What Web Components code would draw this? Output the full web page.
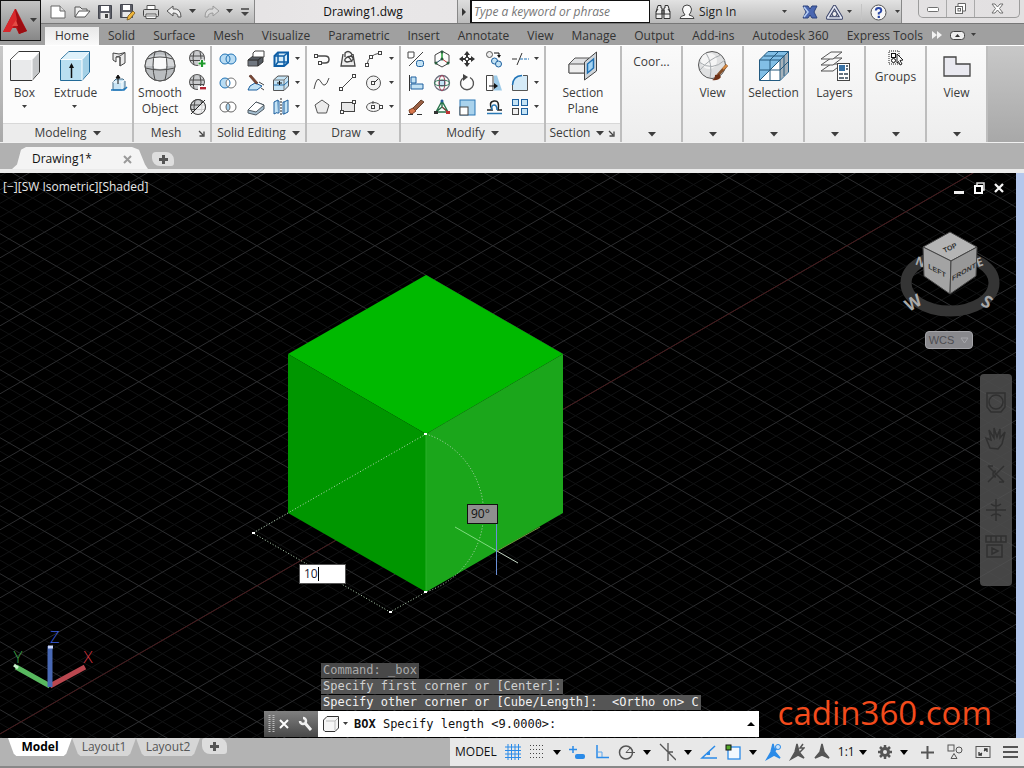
<!DOCTYPE html>
<html lang="en">
<head>
<meta charset="utf-8">
<meta name="viewport" content="width=device-width, initial-scale=1">
<title>Drawing1.dwg</title>
<style>
html, body { margin: 0; height: 100%; }
body { background: #b1b1b1; font: 12px/16px "Open Sans", "Noto Sans", sans-serif; color: #3c3c3c; overflow: hidden; }
</style>
</head>
<body>
<cad-app></cad-app>
<script>
const BASE = `
*,*::before,*::after{box-sizing:border-box}
button{font:inherit;color:inherit;background:none;border:0;margin:0;padding:0;display:inline-flex;align-items:center;justify-content:center;cursor:default}
input{font:inherit;color:inherit;border:0;margin:0;padding:0;background:none;outline:0;border-radius:0}
a{color:inherit;text-decoration:none}
cad-icon{flex:none}
`;
function define(name, css, html, setup) {
  customElements.define(name, class extends HTMLElement {
    constructor() {
      super();
      this.attachShadow({ mode: "open" });
    }
    connectedCallback() {
      if (this.shadowRoot.firstChild) return;
      const markup = typeof html === "function" ? html(this) : html;
      this.shadowRoot.innerHTML = `<style>${BASE}${css}</style>${markup}`;
      if (setup) setup(this);
    }
  });
}

/* Icon drawings: [width, height, markup] */
const K = 'fill="none" stroke="#4a4a4a"';
const B = 'fill="#c4e3f5" stroke="#1c5f9e"';
const dot = (x, y) => `<rect x="${x - 1.5}" y="${y - 1.5}" width="3" height="3" fill="#fff" stroke="#444"/>`;
const sphere = `<circle cx="8" cy="8" r="7.5" fill="#c9cbcd" stroke="#555"/><path d="M1 6H15M1 10.500H15M5 1.500Q3 8 5 15M11 1.500Q13 8 11 15" ${K}/>`;
const rings = f => `<circle cx="6" cy="8" r="5" fill="${f[0]}"/><circle cx="12" cy="8" r="5" fill="${f[1]}"/><path d="M9 4A5 5 0 0 1 9 12A5 5 0 0 1 9 4" fill="${f[2]}"/><circle cx="6" cy="8" r="5" fill="none" stroke="${f[3]}"/><circle cx="12" cy="8" r="5" fill="none" stroke="${f[4]}"/>`;
const person = `M8 1L10 9L15 15L9 12L2 16L6 9Z`;
const ICONS = {
  caret: [8, 5, `<path d="M0 0H8L4 4.500Z" fill="#3d3d3d"/>`],
  caretS: [6, 4, `<path d="M0 0H5L2.500 3Z" fill="#3d3d3d"/>`],
  caretM: [8, 5, `<path d="M0 0H7L3.500 4Z" fill="#3d3d3d"/>`],
  caretB: [8, 5, `<path d="M0 0H8L4 5Z" fill="#000"/>`],
  up: [8, 5, `<path d="M0 4H8L4 0Z" fill="#000"/>`],
  launcher: [7, 7, `<path d="M1 1L5 5M6 1.500V6H1.500" fill="none" stroke="#444" stroke-width="1.300"/>`],
  logo: [24, 26, `<path d="M12 1H13L24 23L16 26L13 20L8 20L7 24L0 24Z" fill="#b41318"/><path d="M12 1L15 11L7 24L0 24Z" fill="#d8272b"/><path d="M12 1L18 13L24 23L16 26L14 18L10 18L14 12Z" fill="#9c0d12"/><path d="M9 18L13 12L15 18Z" fill="#e34b44"/>`],
  newf: [18, 16, `<path d="M2 2H11L16 7V14H2Z" fill="#fff" stroke="#666"/><path d="M11 2V7H16" fill="#ddd" stroke="#666"/>`],
  open: [18, 16, `<path d="M2 13V3H7L9 5H14V7" fill="#eee" stroke="#555"/><path d="M2 13L6 7H17L12 13Z" fill="#fff" stroke="#555"/>`],
  save: [16, 16, `<path d="M1.500 1.500H14.500V14.500H1.500Z" fill="#5b5d66" stroke="#44464e"/><rect x="4" y="2" width="8" height="5" fill="#fff"/><rect x="3.500" y="9" width="9" height="6" fill="#e8e8e8"/><rect x="8" y="10" width="3" height="4" fill="#444"/>`],
  saveas: [17, 18, `<path d="M1.500 1.500H13.500V14.500H1.500Z" fill="#5b5d66" stroke="#44464e"/><rect x="4" y="2" width="7" height="5" fill="#fff"/><rect x="3.500" y="9" width="8" height="5" fill="#e8e8e8"/><path d="M8 17L9 13L14 8L16 10L11 16Z" fill="#f0b63c" stroke="#74551b" stroke-width=".8"/>`],
  print: [18, 16, `<path d="M5 6V1.500H13V6" fill="#fff" stroke="#555"/><rect x="1.500" y="5.500" width="15" height="7" rx="1" fill="#d4d4d4" stroke="#444"/><path d="M4 10H14V14.500H4Z" fill="#fff" stroke="#555"/><path d="M5 12H13" stroke="#777"/>`],
  undo: [17, 13, `<path d="M1 6L7 1V4Q15 3 15 12H12Q12 8 7 8V11Z" fill="#eee" stroke="#555"/>`],
  redo: [17, 13, `<path d="M16 6L10 1V4Q2 3 2 12H5Q5 8 10 8V11Z" fill="#d8d8d8" stroke="#999"/>`],
  more: [10, 8, `<path d="M1 1H9" stroke="#444" stroke-width="1.500"/><path d="M1 4H9L5 8Z" fill="#444"/>`],
  play: [6, 8, `<path d="M1 0L5 4L1 8Z" fill="#333"/>`],
  bino: [16, 16, `<path d="M3 1.500H6V4H7V14.500H1V8ZM10 1.500H13L15 8V14.500H9V4H10ZM7 6H9V10H7ZM1 10H7M9 10H15M1 8L3 5M15 8L13 5" fill="#eee" stroke="#333"/>`],
  person: [16, 16, `<path d="M1 14.500Q1 12 6 11Q3.500 8 3.500 5Q4 1 8 1T12.500 5Q12.500 8 10 11Q15 12 15 14.500Z" fill="#fafafa" stroke="#444"/>`],
  exch: [16, 14, `<path d="M1 1H6L8 4L10 1H15L12 7L15 13H10L8 10L6 13H1L4 7Z" fill="#4a66b0" stroke="#2d437d"/><path d="M2 2L6 7L2 12" fill="none" stroke="#b7cff3" stroke-width="1.500"/>`],
  a360: [17, 15, `<path d="M8.500 1.500L15.500 13H1.500Z" fill="none" stroke="#3b4468" stroke-width="3.500" stroke-linejoin="round"/><path d="M8.500 1.500L15.500 13H1.500Z" fill="none" stroke="#e3e7f2" stroke-width="1.500" stroke-linejoin="round"/><circle cx="8.500" cy="9" r="2.500" fill="#eee" stroke="#3b4468"/>`],
  help: [17, 17, `<circle cx="8.500" cy="8.500" r="7.500" fill="#f7f7f7" stroke="#555"/><path d="M5.800 6.500Q6 4 8.600 4T11.300 6.500Q11.300 8 8.800 9.200V10.500" fill="none" stroke="#2946a4" stroke-width="2"/><rect x="7.700" y="11.800" width="2.200" height="2.200" fill="#2946a4"/>`],
  wmin: [14, 6, `<rect x="1.500" y="1.500" width="11" height="4" rx="1" fill="#fff" stroke="#707070"/>`],
  wmax: [13, 13, `<path d="M4 4V1.500H11.500V9H9" fill="#fff" stroke="#666"/><rect x="1.500" y="4.500" width="7" height="7" fill="#fff" stroke="#666"/><rect x="4" y="6.500" width="2.500" height="2.500" fill="none" stroke="#666"/>`],
  wclose: [13, 11, `<path d="M1 1H4L6.500 4L9 1H12L8.500 5.500L12 10H9L6.500 7L4 10H1L4.500 5.500Z" fill="#fff" stroke="#707070"/>`],
  ff: [10, 8, `<path d="M0 0L5 4L0 8ZM5 0L10 4L5 8Z" fill="#f3f3f3"/>`],
  pill: [15, 9, `<rect x=".5" y=".5" width="14" height="8" rx="3" fill="#eee" stroke="#444"/><path d="M5 6H10L7.500 3Z" fill="#333"/>`],
  box: [32, 32, `<path d="M1.500 9.500L10 1.500H30.500V22L23 30.500H1.500Z" fill="#e9eaeb" stroke="#333"/><path d="M2 9.500L10 2H30L23 9.500Z" fill="#fff"/><path d="M23 10V30L30 22V2.500Z" fill="#c4c6c8"/><path d="M2 9.500H23V30M23 9.500L30 2" stroke="#fff" fill="none"/>`],
  extrude: [32, 32, `<path d="M1.500 9.500L10 1.500H30.500V22L23 30.500H1.500Z" fill="#b9dff1" stroke="#236a97"/><path d="M2 9.500L10 2H30L23 9.500Z" fill="#def2fb"/><path d="M23 10V30L30 22V2.500Z" fill="#a3d0e6"/><path d="M1.500 9.500H23V30.500M23 9.500L30 2" stroke="#fff" fill="none"/><path d="M12.500 28V15" stroke="#111" stroke-width="1.500"/><path d="M10 18L12.500 13L15 18Z" fill="#111"/>`],
  poly: [16, 16, `<path d="M2 2L8 3L14 1.500V12L9 15V6H5V11L2 9Z" fill="#e9e9e9" stroke="#444"/><path d="M5 6L9 5L14 1.500M9 6V15" ${K}/>`],
  press: [18, 18, `<path d="M3 16V8L6 5H13L15 7V14L12 16Z" fill="#c9e4f4" stroke="#436b86"/><path d="M3 8H12V16M12 8L15 6" stroke="#fff" fill="none"/><path d="M1 16H14L17 13" stroke="#1d78be" fill="none" stroke-width="1.500"/><path d="M8 10V2M6 4L8 1L10 4Z" stroke="#111" fill="#111"/>`],
  bigsphere: [32, 32, `<circle cx="16" cy="16" r="15" fill="#babdc0" stroke="#666"/><path d="M4 7Q16 2 28 7L31 16H1Z" fill="#d5d7d9"/><path d="M9 8Q16 6 23 8L22 18Q16 20 10 18Z" fill="#fafafa"/><path d="M3 9Q16 5 29 9M1.500 18Q16 22 30.500 18M11 2Q7 15 11 30M21 2Q25 15 21 30" ${K}/><circle cx="16" cy="16" r="15" fill="none" stroke="#555"/>`],
  smore: [18, 18, sphere + `<path d="M9 13.500H17M13 9.500V17.500" stroke="#fff" stroke-width="4"/><path d="M9.500 13.500H16.500M13 10V17" stroke="#1f9a2c" stroke-width="2.200"/>`],
  sless: [18, 18, sphere + `<rect x="9" y="12" width="8" height="4" fill="#fff"/><rect x="11" y="13" width="6" height="2.400" fill="#b02533"/>`],
  sref: [18, 18, `<g transform="translate(1 1)">${sphere}<path d="M1 15L15 1L16 16H1Z" fill="#fff" opacity=".75"/><path d="M1 15L15 1" stroke="#222"/><circle cx="8" cy="8" r="7.500" fill="none" stroke="#444"/></g>`],
  union: [18, 16, rings(["#b9dcf3", "#b9dcf3", "#b9dcf3", "#2173b5", "#2173b5"])],
  subtract: [18, 16, rings(["#b9dcf3", "#fff", "#fff", "#2173b5", "#777"])],
  intersect: [18, 16, rings(["#fff", "#fff", "#a5d1ee", "#666", "#666"])],
  extrF: [18, 18, `<path d="M1 10H11V16H1Z" fill="#707780" stroke="#444"/><path d="M1 10L6 6H16L11 10ZM11 10L16 6V12L11 16Z" fill="#535960" stroke="#333"/><path d="M6 3L8 1H17V7H6Z" fill="#fff" stroke="#444"/>`],
  thick: [18, 18, `<path d="M3 12L8 9L15 12L10 16L1 16Z" fill="#c4e3f5" stroke="#1c5f9e"/><path d="M2 2L4 1L11 9L9 10Z" fill="#7b4733" stroke="#542f25" stroke-width=".7"/><path d="M12 8L17 11M14 14L17 16" stroke="#444"/>`],
  slice: [18, 18, `<path d="M1 12L9 4L17 7V11L9 17L1 15Z" fill="#a5bed0" stroke="#4d5861"/><path d="M1 12L9 4L17 7L9 14Z" fill="#fff" stroke="#4d5861"/>`],
  shell: [18, 18, `<path d="M2.500 6L6 2.500H16V12.500L12 16H2.500Z" fill="#d6edf9" stroke="#0f5fa6" stroke-width="2"/><path d="M2.500 6H12V16M12 6L16 2.500M6 3V12H16M6 12L3 16" fill="none" stroke="#0f5fa6" stroke-width="1.500"/>`],
  imprint: [18, 18, `<path d="M1.500 6L6 2H16.500V12L12 16.500H1.500Z" fill="#c4e3f5" stroke="#555"/><path d="M1.500 6H12V16M12 6L16 2" fill="none" stroke="#777"/><path d="M1.500 11H12L16.500 7" fill="none" stroke="#246ca5"/><path d="M5 9H10M7.500 7V11" stroke="#111"/>`],
  separate: [18, 18, `<path d="M2 4L6 2V14L2 16ZM12 4L16 2V14L12 16Z" ${B}/><path d="M6 3H7V15H5M12 4H11V16H12" ${B}/><path d="M9 0V18" stroke="#222" stroke-dasharray="2 1"/>`],
  pline: [18, 18, `<path d="M3 6H12Q16 6 16 9.500T12 13H7" ${K} stroke-width="1.500"/>${dot(3, 6)}${dot(7, 13)}`],
  helix: [18, 18, `<path d="M4 4L2 16H16L14 4M6 7V3Q9 0 12 3T8 7Q13 5 14 8T8 12Q4 11 7 8T13 12" fill="#eee" stroke="#444" stroke-width="1.300"/>`],
  arc: [18, 18, `<path d="M2 15Q3 5 15 3" ${K}/>${dot(2, 15)}${dot(6, 7)}${dot(15, 3)}`],
  spline: [18, 18, `<path d="M1 15Q4 0 8 8T16 4" ${K}/>`],
  line: [18, 18, `<path d="M2 15L15 2" ${K}/>${dot(2, 15)}${dot(15, 2)}`],
  circle: [18, 18, `<circle cx="8.500" cy="9" r="7" fill="#f4f4f4" stroke="#555"/><path d="M9 9L13 5" stroke="#333"/>${dot(8, 9)}`],
  pgon: [18, 18, `<path d="M9 2L16 7L13.500 15H4.500L2 7Z" fill="#ececec" stroke="#555"/>`],
  rect: [18, 18, `<rect x="2.500" y="4.500" width="13" height="9" fill="#e8e8e8" stroke="#444"/>${dot(3, 14)}${dot(15, 4)}`],
  ellipse: [18, 18, `<ellipse cx="8.500" cy="9" rx="7" ry="4.500" fill="#f4f4f4" stroke="#555"/>${dot(8, 9)}${dot(16, 9)}<path d="M8 3V6" stroke="#444"/>`],
  m3: [18, 18, `<path d="M1 2H7V7L5 8H1ZM2 16L16 2" fill="#fff" stroke="#444"/><rect x="9.500" y="10.500" width="7" height="6" rx="2" ${B}/>`],
  gizmo: [18, 18, `<path d="M9 1L16 5V13L9 17L2 13V5Z" fill="none" stroke="#444"/><path d="M9 9V3" stroke="#26a33a" stroke-width="1.500"/><path d="M9 9L15 13" stroke="#b33"/><path d="M9 9L3 13" stroke="#246"/><g fill="#275c3d"><circle cx="9" cy="2" r="1.500"/><circle cx="3" cy="13" r="1.500"/><circle cx="15" cy="13" r="1.500"/><circle cx="9" cy="9" r="1.500"/></g>`],
  move: [18, 18, `<path d="M9 1L12 5H6ZM9 17L12 13H6ZM1 9L5 6V12ZM17 9L13 6V12Z" fill="#333"/><path d="M9 5V7M9 11V13M5 9H7M11 9H13" stroke="#333" stroke-width="2"/><rect x="7.500" y="7.500" width="3" height="3" fill="#fff" stroke="#444"/>`],
  copy: [18, 18, `<circle cx="4.500" cy="4.500" r="3" fill="#eee" stroke="#555"/><circle cx="9.500" cy="11" r="3" ${B}/><circle cx="13.500" cy="14" r="3" ${B}/><path d="M9 3H14V5" fill="none" stroke="#111"/><path d="M12 5H16L14 8Z" fill="#111"/>`],
  trim: [18, 18, `<path d="M1 9H6M11 3L6 15" stroke="#333" fill="none"/><path d="M9 9H18" stroke="#2173b5" stroke-dasharray="3 1"/>`],
  align3: [18, 18, `<path d="M2.500 1V17" stroke="#333"/><path d="M4 3H9V9H4ZM4 10H16V15H4Z" ${B}/>`],
  rot3: [18, 18, `<circle cx="9" cy="9" r="7.500" fill="none" stroke="#6c6f7d" stroke-width="1.300"/><ellipse cx="9" cy="9" rx="3" ry="7.500" fill="none" stroke="#a43e58"/><ellipse cx="9" cy="9" rx="7.500" ry="3" fill="none" stroke="#39815c"/><rect x="6.500" y="6.500" width="5" height="5" fill="#c4e3f5" stroke="#556"/>`],
  rotate: [18, 18, `<path d="M12 3.500A6.500 6.500 0 1 1 6 3.500" fill="none" stroke="#555" stroke-width="1.400"/><path d="M5 0L10 3L5 7Z" fill="#444"/>`],
  stretch: [18, 18, `<path d="M1.500 1.500H8V16.500H1.500Z" fill="#fff" stroke="#444"/><path d="M9 1.500H12L17 16.500H9Z" fill="#9dcbe9"/><path d="M4 12H10" stroke="#111"/><path d="M9 9L13 12L9 15Z" fill="#111"/>`],
  fillet: [18, 18, `<path d="M1.500 16.500V11Q1.500 2 12 1.500H16.500V16.500Z" fill="#d5ebf8"/><path d="M1.500 11Q2 2 11 1.500" fill="none" stroke="#1f73b7" stroke-width="1.500"/><path d="M1.500 11V16.500H16.500V1.500H12" fill="none" stroke="#555"/>`],
  erase: [18, 18, `<path d="M5 11L14 2L17 4L8 13Z" fill="#9a6044" stroke="#66432f"/><path d="M2 12L6 10L9 13L5 16Q2 16 2 12Z" fill="#d9764b" stroke="#7d432a"/><path d="M1 16.500H17" stroke="#333" stroke-dasharray="5 4"/>`],
  sc3: [18, 18, `<path d="M9 3L3 14H15ZM9 3V9L3 14M9 9L15 14" fill="none" stroke="#277249" stroke-width="1.400"/><path d="M9 9L15 14" stroke="#a52d3c"/><circle cx="9" cy="3" r="1.500" fill="#275c9d"/><rect x="1" y="13" width="4" height="3" fill="#333"/><rect x="13" y="13" width="4" height="3" fill="#b33"/>`],
  scale: [18, 18, `<rect x="2" y="2" width="15" height="15" fill="#a9d2ec" stroke="#2b77b4"/><rect x="2" y="9" width="8" height="8" fill="#fff" stroke="#444"/>`],
  offset: [18, 18, `<path d="M2 12H7Q3 4 9 3T13 12H17" fill="none" stroke="#222" stroke-width="1.500"/><path d="M2 15.500H17M7 12Q6 7 9 7T12 12" fill="none" stroke="#2878b5" stroke-width="1.500"/>`],
  array: [18, 18, `<g ${B}><rect x="1.500" y="1.500" width="6" height="6"/><rect x="10.500" y="1.500" width="6" height="6"/><rect x="10.500" y="10.500" width="6" height="6"/></g><rect x="1.500" y="10.500" width="6" height="6" fill="#eee" stroke="#444"/>`],
  section: [32, 32, `<path d="M2 14L8 8H22V23H2Z" fill="#e0e1e3" stroke="#555"/><path d="M2 14H18V23H2Z" fill="#eee" stroke="#555"/><path d="M17.500 12L29.500 2V21L17.500 30Z" fill="#cfd5da" stroke="#444"/><path d="M20.500 14L26.500 9V18L20.500 23Z" fill="#a5d4f3" stroke="#1e70b3" stroke-width="1.500"/>`],
  viewball: [32, 32, `<circle cx="15" cy="15" r="13.500" fill="#dfe0e1" stroke="#555"/><circle cx="12" cy="11" r="8" fill="#f5f5f5"/><path d="M2 12Q15 22 28 10M9 3Q16 14 13 28M3 20Q12 9 24 5" fill="none" stroke="#a9adb0"/><path d="M30 15L21 25" stroke="#85502a" stroke-width="3"/><path d="M30 15L26 19" stroke="#d78c43" stroke-width="2"/><path d="M15 30Q18 29 18 25L22 24L24 27Q21 31 15 30Z" fill="#6e3117"/>`],
  selection: [32, 32, `<path d="M1.500 10L10 1.500H30.500V22L22 30.500H1.500Z" fill="#82bfe6" stroke="#235a80"/><path d="M2 30L22 10V30Z" fill="#fff"/><path d="M22 10L30 2V22L22 30Z" fill="#a7b2ba"/><path d="M1.500 10H22V30.500M22 10L30.500 1.500M12 10V30M2 20H22L30 12M12 10L20 2M6 6H26V26M2 30L22 10" fill="none" stroke="#24597d"/>`],
  layers: [32, 32, `<g fill="#f7f7f7" stroke="#555"><path d="M2 21L12 14H23L14 21Z"/><path d="M2 15L12 8H23L14 15Z"/><path d="M2 9L12 2H23L14 9Z"/></g><rect x="18.500" y="13.500" width="12" height="17" fill="#fff" stroke="#444"/><rect x="20" y="15" width="6" height="6" fill="#3771a5"/><path d="M27 16H29M27 19H29M20 24H24M25 24H29M20 28H25M26 28H29" stroke="#345" stroke-width="1.500"/>`],
  groups: [16, 16, `<rect x="1" y="1" width="10" height="13" fill="none" stroke="#222" stroke-dasharray="1 1"/><rect x="3.500" y="3.500" width="4" height="4" fill="#fff" stroke="#111"/><circle cx="5.500" cy="10.500" r="2" fill="#fff" stroke="#111"/><path d="M9 4L15 10L12 10.500L14 14L12 15L10.500 11.500L9 13Z" fill="#fff" stroke="#222"/>`],
  viewL: [32, 32, `<path d="M3 7H15V14H29V26H3Z" fill="#e9e9f0" stroke="#444" stroke-width="1.300"/>`],
  x: [9, 9, `<path d="M1 1L8 8M8 1L1 8" stroke="#9a9a9a" stroke-width="2"/>`],
  plus: [9, 9, `<path d="M4.500 0V9M0 4.500H9" stroke="#555" stroke-width="3"/>`],
  vmin: [11, 12, `<rect y="9" width="10" height="3" fill="#eee"/>`],
  vmax: [11, 12, `<path d="M3 3V1H10V8H8" fill="none" stroke="#ddd" stroke-width="1.500"/><rect x="1" y="4" width="7" height="7" fill="none" stroke="#fff" stroke-width="2"/>`],
  vclose: [10, 10, `<path d="M1 1L9 9M9 1L1 9" stroke="#f5f5f5" stroke-width="2.300"/>`],
  grip: [7, 18, `<path d="M1.500 0V18M5.500 0V18" stroke="#bbb" stroke-width="2" stroke-dasharray="1 1"/>`],
  cx: [10, 10, `<path d="M1 1L9 9M9 1L1 9" stroke="#fff" stroke-width="2"/>`],
  wrench: [15, 16, `<path d="M7 7L13 14" stroke="#f2f2f2" stroke-width="3"/><path d="M5 2A3 3 0 1 1 2 5" fill="none" stroke="#f2f2f2" stroke-width="2.500"/>`],
  cbox: [18, 18, `<path d="M1.500 5L5 1.500H16.500V13L13 16.500H3L1.500 15Z" fill="#f5f5f5" stroke="#333"/><path d="M4 6H13V15M13 6L16 3" stroke="#bbb" fill="none"/>`],
  sgrid: [16, 16, `<path d="M3 0V16M6.500 0V16M10 0V16M13.500 0V16M0 3H16M0 6.500H16M0 10H16M0 13.500H16" stroke="#2b8be8"/>`],
  sdots: [16, 16, `<path d="M1 1.500H16M1 5.500H16M1 9.500H16M1 13.500H16" stroke="#444" stroke-dasharray="1 2"/>`],
  ssnap: [17, 15, `<path d="M4 1V8M0 4.500H8" stroke="#2b8be8" stroke-width="1.500"/><rect x="6" y="9" width="10" height="5" rx="2" fill="#2b8be8"/>`],
  sortho: [16, 16, `<path d="M3 1V13.500H15" fill="none" stroke="#2b8be8" stroke-width="1.500"/><path d="M3 8H8V13" fill="none" stroke="#5aa6ee"/>`],
  spolar: [17, 17, `<circle cx="8" cy="8.500" r="6.500" fill="none" stroke="#555" stroke-width="1.500"/><path d="M8 8.500H17M8 8.500L13 3" stroke="#555" fill="none"/>`],
  siso: [17, 18, `<path d="M1 1L17 17M9 0V18M9 9L14 9" stroke="#555" stroke-width="1.300"/>`],
  strack: [17, 15, `<path d="M15 1L2 13H17" fill="none" stroke="#2b8be8" stroke-width="1.500"/><rect x="7" y="7" width="3" height="3" fill="#2b8be8"/>`],
  sosnap: [16, 17, `<rect x="3" y="3" width="12" height="12" fill="#f2f8fe" stroke="#2b8be8" stroke-width="1.300"/><rect x="1" y="1" width="5" height="5" fill="#53a728" stroke="#111"/>`],
  sann: [16, 18, `<path d="${person}" fill="#2b8be8" stroke="#2b8be8" stroke-width="1.500"/><path d="M8 9L13 4" stroke="#2b8be8" stroke-width="2"/><circle cx="13" cy="4" r="2.500" fill="#cfe5fa" stroke="#2b8be8"/>`],
  sauto: [16, 18, `<path d="${person}" fill="#555" stroke="#555" stroke-width="1.500"/><path d="M14 1L11 5H15L10 10" fill="none" stroke="#555" stroke-width="1.500"/>`],
  stri: [17, 18, `<path d="M9 1L11 9L16 15L9 12L2 15L7 9Z" fill="#555" stroke="#555" stroke-width="1.500"/>`],
  gear: [14, 14, `<circle cx="7" cy="7" r="3.500" fill="none" stroke="#555" stroke-width="3"/><path d="M7 0V3M7 11V14M0 7H3M11 7H14M2 2L4 4M10 10L12 12M12 2L10 4M2 12L4 10" stroke="#555" stroke-width="2.500"/>`],
  splus: [15, 15, `<path d="M7.500 1V14M1 7.500H14" stroke="#555" stroke-width="2"/>`],
  shapes: [16, 16, `<rect x="1" y="1" width="6" height="6" fill="none" stroke="#555"/><circle cx="12" cy="6" r="3" fill="none" stroke="#555"/><path d="M7 9.500L10 14.500H4Z" fill="none" stroke="#555"/>`],
  clean: [16, 14, `<rect x="1" y="1.500" width="14" height="11" fill="none" stroke="#555"/><path d="M4 10L7 8M9 6L12 4M9 4H12V7M4 7V10H7" fill="none" stroke="#333" stroke-width="1.300"/>`],
  burger: [15, 14, `<path d="M0 2H15M0 7H15M0 12H15" stroke="#555" stroke-width="2"/>`]
};
customElements.define("cad-icon", class extends HTMLElement {
  connectedCallback() {
    if (this.shadowRoot) return;
    const [w, h, body] = ICONS[this.getAttribute("name")];
    this.attachShadow({ mode: "open" }).innerHTML =
      `<style>:host{display:block;width:${w}px;height:${h}px}svg{display:block}</style>
       <svg width="${w}" height="${h}" viewBox="0 0 ${w} ${h}" aria-hidden="true">${body}</svg>`;
  }
});
const ico = n => `<cad-icon name="${n}"></cad-icon>`;
const ibtn = (n, label) => `<button aria-label="${label || n}">${ico(n)}</button>`;

/* Quick access bar, document title, search and account tools */
define("title-bar", `
:host{display:flex;align-items:stretch;height:24px;background:linear-gradient(90deg,#dddbdc,#e9e7e8 30%,#e2e0e1);border-bottom:1px solid #777;color:#222}
.qat{display:flex;align-items:center;gap:6px;width:214px;padding-left:8px;background:linear-gradient(#e2e2e2,#b9b9b9);border-right:1px solid #888}
h1{font:inherit;margin:0;flex:1;display:flex;align-items:center;justify-content:center;color:#111;padding:1px 0 0 14px}
.search{display:flex;width:193px;border-left:1px solid #888}
.search button{width:12px;background:linear-gradient(#ddd,#bbb)}
.search input{flex:1;min-width:0;background:#fff;border:1px solid #111;border-width:1px 1px 1px 2px;padding:1px 2px 0;color:#222}
.search input::placeholder{color:#777;font-style:italic;opacity:1}
.acct{display:flex;align-items:center;width:252px;padding:1px 0 0 5px;background:linear-gradient(#e2e2e2,#b9b9b9);border-right:1px solid #888}
.acct button{margin-right:8px}
.acct .name{margin:0;flex:1;justify-content:space-between;padding-right:14px;gap:4px}
.acct .tight{margin-right:4px}
.acct .sep{width:1px;height:16px;background:#c4c4c4;margin:0 8px}
.win{display:flex;width:102px;height:18px;margin:0 4px 0 16px;border:1px solid #9c9c9c;border-top:0;border-radius:0 0 5px 5px}
.win button{width:28px;border-right:1px solid #aaa}
.win button:last-child{flex:1;border:0}
`, `
<div class="qat">${ibtn("newf", "New")}${ibtn("open", "Open")}${ibtn("save", "Save")}${ibtn("saveas", "Save as")}${ibtn("print", "Plot")}${ibtn("undo", "Undo")}${ibtn("caretM", "Undo list")}${ibtn("redo", "Redo")}${ibtn("caretM", "Redo list")}${ibtn("more", "Customize")}</div>
<h1>Drawing1.dwg</h1>
<div class="search">${ibtn("play", "Collapse")}<input type="text" aria-label="Search" placeholder="Type a keyword or phrase"></div>
<div class="acct">${ibtn("bino", "Search")}<button class="tight" aria-label="Account">${ico("person")}</button><button class="name">Sign In ${ico("caretS")}</button>${ibtn("exch", "Exchange")}<button class="tight" aria-label="A360">${ico("a360")}</button>${ico("caretS")}<span class="sep"></span>${ibtn("help", "Help")}${ico("caretS")}</div>
<div class="win">${ibtn("wmin", "Minimize")}${ibtn("wmax", "Restore")}${ibtn("wclose", "Close")}</div>`);

define("ribbon-tabs", `
:host{display:block;background:#a0a0a0}
nav{display:flex;height:21px;padding-left:4px}
a{display:flex;align-items:center;padding:2px 9px 0;white-space:nowrap;color:#333}
a[aria-current]{background:linear-gradient(#e8e8e8,#fafafa);margin:3px 0 0;padding:0 10px}
button{padding-top:1px;gap:6px}
button+button{margin-left:8px}
`, () => `<nav>${["Home", "Solid", "Surface", "Mesh", "Visualize", "Parametric", "Insert", "Annotate", "View", "Manage", "Output", "Add-ins", "Autodesk 360", "Express Tools"]
  .map((t, i) => `<a href="#${t.replace(/\W/g, "")}"${i ? "" : ' aria-current="page"'}>${t}</a>`).join("")}
${ibtn("ff", "More tabs")}<button aria-label="Minimize ribbon">${ico("pill")}${ico("caretS")}</button></nav>`);

/* Large command: icon above a caption; the caption is slotted */
define("big-button", `
:host{display:flex;justify-content:center;text-align:center}
button{flex-direction:column;justify-content:flex-start;gap:3px}
cad-icon{margin:0 auto}
.more{margin-top:1px}
`, el => `<button>${ico(el.getAttribute("icon"))}<span><slot></slot></span>${el.hasAttribute("menu") ? `<cad-icon class="more" name="caretS"></cad-icon>` : ""}</button>`);

/* Grid of small tools; data-icons lists names, data-cols the column widths */
define("tool-grid", `
:host{display:grid;grid-auto-rows:24px;justify-items:center;align-items:center;align-content:start}
button{width:18px;height:18px}
`, el => {
  el.style.gridTemplateColumns = el.dataset.cols;
  return el.dataset.icons.split(" ").map(n => ibtn(n)).join("");
});

define("ribbon-panel", `
:host{display:flex;flex-direction:column;background:#fcfcfc;border-right:2px solid #bdbdbd;flex:none}
.body{flex:1;display:flex;padding-top:4px}
footer{display:flex;height:19px;background:#ececec;border-top:1px solid #d8d8d8;align-items:center}
footer button{flex:1;gap:6px;white-space:nowrap}
footer .launch{flex:none;margin-right:5px}
:host([compact]){background:linear-gradient(#fafafa,#ededed);width:61px}
:host([compact]) .body{justify-content:center}
:host([compact]) footer{background:none;border:0;padding-top:3px}
`, el => {
  const label = el.getAttribute("label") || "";
  const menu = el.hasAttribute("menu");
  return `<div class="body"><slot></slot></div><footer><button${label ? "" : ' aria-label="Expand"'}>${label}${menu ? ico("caret") : ""}</button>${el.hasAttribute("launcher") ? `<button class="launch" aria-label="Settings">${ico("launcher")}</button>` : ""}</footer>`;
});

define("cad-ribbon", `
:host{display:flex;height:98px;padding:0 2px 0 3px;background:linear-gradient(#c8c8c8,#a8a8a8);border-top:1px solid #fff;border-bottom:1px solid #f0f0f0}
.w1{width:131px}.w2{width:78px}.w3{width:95px}.w4{width:94px}.w5{width:145px}.w6{width:76px}
.box{width:43px}.ext{width:59px}.sm{width:52px}.sec{width:75px}
tool-grid{margin-top:-3px}
.pad{margin-left:2px}
.low{padding-top:4px}
`, `
<ribbon-panel class="w1" label="Modeling" menu><big-button class="box" icon="box" menu>Box</big-button><big-button class="ext" icon="extrude" menu>Extrude</big-button><tool-grid data-cols="27px" data-icons="poly press"></tool-grid></ribbon-panel>
<ribbon-panel class="w2" label="Mesh" launcher><big-button class="sm" icon="bigsphere">Smooth<br>Object</big-button><tool-grid data-cols="24px" data-icons="smore sless sref"></tool-grid></ribbon-panel>
<ribbon-panel class="w3" label="Solid Editing" menu><tool-grid class="pad" data-cols="28px 28px 22px 12px" data-icons="union extrF shell caretS subtract thick imprint caretS intersect slice separate caretS"></tool-grid></ribbon-panel>
<ribbon-panel class="w4" label="Draw" menu><tool-grid class="pad" data-cols="26px 26px 26px 10px" data-icons="pline helix arc caretS spline line circle caretS pgon rect ellipse caretS"></tool-grid></ribbon-panel>
<ribbon-panel class="w5" label="Modify" menu><tool-grid class="pad" data-cols="26px 26px 24px 30px 22px 12px" data-icons="m3 gizmo move copy trim caretS align3 rot3 rotate stretch fillet caretS erase sc3 scale offset array caretS"></tool-grid></ribbon-panel>
<ribbon-panel class="w6" label="Section" menu launcher><big-button class="sec" icon="section">Section<br>Plane</big-button></ribbon-panel>
<ribbon-panel compact menu><span class="low">Coor...</span></ribbon-panel>
<ribbon-panel compact menu><big-button icon="viewball">View</big-button></ribbon-panel>
<ribbon-panel compact menu><big-button icon="selection">Selection</big-button></ribbon-panel>
<ribbon-panel compact menu><big-button icon="layers">Layers</big-button></ribbon-panel>
<ribbon-panel compact menu><big-button icon="groups">Groups</big-button></ribbon-panel>
<ribbon-panel compact menu><big-button icon="viewL">View</big-button></ribbon-panel>`);

define("document-tabs", `
:host{display:flex;align-items:flex-end;height:30px;padding:0 12px;background:#b1b1b1;border-bottom:4px solid #ebebeb}
.tab{display:flex;align-items:center;justify-content:space-between;width:136px;height:22px;padding:2px 16px 0 20px;background:#f4f4f4;clip-path:polygon(0 100%,5px 80%,9px 12%,14px 0,120px 0,127px 12%,133px 80%,100% 100%);color:#111}
.add{width:22px;height:14px;margin:0 0 3px 4px;background:#dedede;border-radius:4px 8px 3px 8px}
`, `<div class="tab"><a href="#drawing1">Drawing1*</a>${ibtn("x", "Close drawing")}</div><button class="add" aria-label="New drawing">${ico("plus")}</button>`);

/* Floating command line with its history above it */
define("command-line", `
:host{display:block;width:495px}
ol{list-style:none;margin:0 0 0 57px;padding:0;font:12px/15px "DejaVu Sans Mono","Liberation Mono",monospace;color:#f2f2f2;white-space:pre}
li{width:max-content;padding:0 2px;background:#555;margin-bottom:1px}
li:first-child{color:#a8a8a8;background:#484848}
li:nth-child(2){color:#d0d0d0}
.bar{display:flex;height:26px;background:#fff;font:12px/16px "DejaVu Sans Mono","Liberation Mono",monospace;color:#111;align-items:center;padding-right:4px}
.grip{display:flex;flex:none;align-items:center;gap:4px;width:54px;height:100%;padding-left:4px;background:linear-gradient(#808080,#484848);margin-right:4px}
.grip button:last-child{margin-left:5px}
.drop{margin-left:3px}
label{margin-left:5px;white-space:pre}
.bar input{flex:1;min-width:0}
`, `<ol><li>Command: _box</li><li>Specify first corner or [Center]:</li><li>Specify other corner or [Cube/Length]:  &lt;Ortho on&gt; C</li></ol>
<div class="bar"><div class="grip">${ico("grip")}${ibtn("cx", "Close")}${ibtn("wrench", "Customize")}</div>${ico("cbox")}<cad-icon class="drop" name="caretS"></cad-icon><label for="cmd"><b>BOX</b> Specify length &lt;9.0000&gt;:</label><input id="cmd" type="text">${ibtn("up", "History")}</div>`);

/* Isometric drawing: ground grid, shaded solid, dimensions, axes and compass */
function grid() {
  const W = 118, H = 68, s = H / W;
  let minor = "", major = "";
  for (let i = -60; i <= 110; i++) {
    const y1 = 257.8 + i * H / 5;
    const up = `M0 ${y1.toFixed(1)}L1024 ${(y1 - 1024 * s).toFixed(1)}`;
    const y2 = 165.7 + i * H / 5;
    const dn = `M0 ${y2.toFixed(1)}L1024 ${(y2 + 1024 * s).toFixed(1)}`;
    if (i % 5) minor += up + dn; else major += up + dn;
  }
  return `<path d="${minor}" stroke="#111213"/><path d="${major}" stroke="#2c2d2f"/>`;
}
define("model-canvas", `
:host{display:block;background:#000}
svg{display:block;width:100%;height:100%}
text{font-family:"Open Sans","Noto Sans",sans-serif}
.face text{font-family:"Liberation Sans",sans-serif}
`, () => `<svg viewBox="0 173 1016 565" preserveAspectRatio="xMinYMin slice" role="img" aria-label="Isometric view of a cube">
<g fill="none">${grid()}<path d="M0 734L973 173" stroke="#47191b"/></g>
<path d="M426 275L563 354L426 434L288 354Z" fill="#00b900"/>
<path d="M288 354L426 434V592L288 513Z" fill="#009600"/>
<path d="M426 434L563 354V513L426 592Z" fill="#1ba61b"/>
<path d="M426 434V592" stroke="#2ab02a"/>
<path d="M426 434L253 533L390 612L426 592M426 434A83 83 0 0 1 426 592" fill="none" stroke="#b9d8b9" stroke-dasharray="1 2"/>
<g fill="#fff"><path d="M424 433h3v2h-3zM252 532h3v2h-3zM389 611h3v2h-3zM424 591h3v2h-3z"/></g>
<path d="M455 527L497 551" stroke="#7fdc7f"/><path d="M497 551L518 563" stroke="#c6d8c6"/><path d="M497 551L540 527" stroke="#6e9b3c"/>
<path d="M496.500 524V575" stroke="#6a8fd8"/>
<path d="M50 686L16 667" stroke="#58b85f" stroke-width="5"/><path d="M50 686L85 667" stroke="#b9474f" stroke-width="5"/><path d="M50 687V646" stroke="#4868b4" stroke-width="5"/>
<path d="M14 665L18 668" stroke="#c7f0ca" stroke-width="3"/><path d="M48 647H53" stroke="#c9d6ff" stroke-width="3"/>
<g font-size="17" font-weight="300" text-anchor="middle"><text x="55" y="643" fill="#3c5fe0">Z</text><text x="18" y="663" fill="#3ea14a">Y</text><text x="88" y="663" fill="#d03440">X</text></g>
<ellipse cx="950" cy="283" rx="44" ry="28" fill="none" stroke="#343434" stroke-width="11"/>
<g font-size="17" font-weight="700" fill="#a9a9a9" text-anchor="middle"><text transform="translate(916 308) rotate(-30)">W</text><text transform="translate(984 307) rotate(30)">S</text><text transform="translate(919 266) rotate(20)" font-size="12">N</text><text transform="translate(981 266) rotate(-20)" font-size="12">E</text></g>
<path d="M950 232L977 247L951 261L923 247Z" fill="#b4b4b4" stroke="#444"/><path d="M923 247L951 261L950 294L924 276Z" fill="#a3a3a3" stroke="#444"/><path d="M951 261L977 247L976 276L950 294Z" fill="#989898" stroke="#444"/>
<g class="face" font-size="7" font-weight="700" fill="#333" text-anchor="middle"><text transform="translate(951 250) rotate(-25)">TOP</text><text transform="translate(937 273) skewY(28)">LEFT</text><text transform="translate(964 274) skewY(-30)">FRONT</text></g>
</svg>`);

define("navigation-bar", `
:host{display:flex;flex-direction:column;align-items:center;background:rgba(84,84,84,.82);border-radius:4px;width:32px;padding:16px 0}
button{width:26px;height:26px;margin-bottom:12px}
svg{fill:none;stroke:#303030;stroke-width:1.500}
`, () => ["M3 3H21V17L17 22H7L3 17ZM12 5A7 7 0 1 0 12 19A7 7 0 1 0 12 5", "M6 22L2 12L7 14L5 4L10 12L10 2L13 11L16 3V12L21 6L18 18L14 23Z", "M4 4L20 20M20 4L4 20M4 4H9M15 20H20M12 9A3 3 0 1 0 12 15", "M12 1V23M2 12H22M7 6Q12 10 17 6M7 18Q12 14 17 18", "M2 2H22V8H2ZM7 2V8M12 2V8M17 2V8M3 11H18V23H3ZM8 14L14 17L8 20Z"]
  .map((d, i) => `<button aria-label="${["Wheel", "Pan", "Zoom", "Orbit", "Motion"][i]}"><svg width="24" height="24"><path d="${d}"/></svg></button>`).join(""));

define("drawing-view", `
:host{display:block;position:relative;overflow:hidden;background:#000;border-right:8px solid #b4c7ec}
model-canvas{position:absolute;inset:0}
.views{position:absolute;left:3px;top:6px;display:flex;color:#e8e8e8}
.ctl{position:absolute;right:12px;top:9px;display:flex;gap:9px;align-items:center}
.len{position:absolute;left:299px;top:391px;display:flex;align-items:center;width:47px;height:20px;padding-left:4px;background:#fff;border:1px solid #555;color:#223}
.len input{width:14px;height:16px}
.len i{width:1px;height:14px;background:#000}
.ang{position:absolute;left:467px;top:331px;width:31px;height:20px;border:1px solid #111;background:#8f8f8f;color:#111;padding:1px 3px}
.wcs{position:absolute;right:43px;top:158px;width:48px;height:18px;border:1px solid #a4a4a8;border-radius:4px;background:#88888c;color:#4e4e52;font:11px/14px "Liberation Sans",sans-serif;gap:6px}
navigation-bar{position:absolute;right:4px;top:201px;height:212px}
.mark{position:absolute;right:24px;bottom:1px;font:33px/48px "Open Sans","Noto Sans",sans-serif;color:#f34b1c}
command-line{position:absolute;left:264px;bottom:1px}
`, `<model-canvas></model-canvas>
<div class="views"><button>[−]</button><button>[SW Isometric]</button><button>[Shaded]</button></div>
<div class="ctl">${ibtn("vmin", "Minimize view")}${ibtn("vmax", "Restore view")}${ibtn("vclose", "Close view")}</div>
<button class="wcs">WCS <svg width="9" height="7" fill="none" stroke="#a8a8ac"><path d="M1 1H8L4.500 6Z"/></svg></button>
<navigation-bar></navigation-bar>
<div class="len"><input type="text" value="10" aria-label="Length"><i></i></div><div class="ang">90°</div>
<div class="mark">cadin360.com</div>
<command-line></command-line>`);

define("status-bar", `
:host{display:flex;height:30px;background:#b3b3b3;border-bottom:2px solid #888}
nav{display:flex;flex:1;padding-left:8px;align-items:flex-start}
nav a{display:flex;align-items:center;justify-content:center;width:64px;height:18px;background:#d6d6d6;color:#555;clip-path:polygon(0 0,100% 0,91% 88%,87% 100%,13% 100%,9% 88%)}
nav a[aria-current]{background:#fff;color:#000;font-weight:700}
nav button{width:25px;height:16px;background:#dcdcdc;border-radius:3px 8px 3px 8px;margin-left:2px}
.tools{display:flex;align-items:center;gap:8px;width:574px;padding:0 6px 0 5px;background:#e8e8e8;color:#111}
.ratio{gap:4px;margin-right:3px}
.end{display:flex;align-items:center;gap:12px;margin-left:auto}
`, `<nav><a href="#model" aria-current="page">Model</a><a href="#layout1">Layout1</a><a href="#layout2">Layout2</a>${ibtn("plus", "New layout")}</nav>
<div class="tools"><button>MODEL</button>${["sgrid", "sdots", "caretB", "ssnap", "sortho", "spolar", "caretB", "siso", "caretB", "strack", "sosnap", "caretB", "sann", "sauto", "stri"].map(n => ibtn(n)).join("")}<button class="ratio">1:1${ico("caretB")}</button>${ibtn("gear")}${ibtn("caretB")}<div class="end">${["splus", "shapes", "clean", "burger"].map(n => ibtn(n)).join("")}</div></div>`);

define("cad-app", `
:host{display:flex;flex-direction:column;height:100%;min-height:500px}
header{display:grid;grid-template-columns:41px 1fr;grid-template-rows:24px 21px}
.side{grid-row:1/3;background:#a0a0a0}
.app{background:linear-gradient(#c3c3c3,#878787);border:1px solid #111;width:41px;height:41px;gap:3px}
drawing-view{flex:1}
`, `<header><div class="side"><button class="app" aria-label="Application menu">${ico("logo")}${ico("caretM")}</button></div><title-bar></title-bar><ribbon-tabs></ribbon-tabs></header>
<cad-ribbon></cad-ribbon><document-tabs></document-tabs><drawing-view></drawing-view><status-bar></status-bar>`);
</script>
</body>
</html>
